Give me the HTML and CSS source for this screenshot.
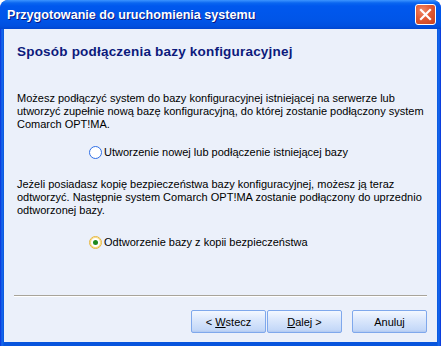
FILE: index.html
```html
<!DOCTYPE html>
<html>
<head>
<meta charset="utf-8">
<link rel="stylesheet" href="styles.css">
</head>
<body>
<div class="window">
  <div class="titlebar">
    <span class="title">Przygotowanie do uruchomienia systemu</span>
    <span class="close">
      <svg width="21" height="21" viewBox="0 0 21 21">
        <path d="M6 6 L15 15 M15 6 L6 15" stroke="#fff" stroke-width="2.2" stroke-linecap="square"/>
      </svg>
    </span>
  </div>
  <div class="client">
    <h1 class="heading">Sposób podłączenia bazy konfiguracyjnej</h1>
    <p class="text p1">Możesz podłączyć system do bazy konfiguracyjnej istniejącej na serwerze lub<br>utworzyć zupełnie nową bazę konfiguracyjną, do której zostanie podłączony system<br>Comarch OPT!MA.</p>
    <label class="radio r1"><span class="dot"></span>Utworzenie nowej lub podłączenie istniejącej bazy</label>
    <p class="text p2">Jeżeli posiadasz kopię bezpieczeństwa bazy konfiguracyjnej, możesz ją teraz<br>odtworzyć. Następnie system Comarch OPT!MA zostanie podłączony do uprzednio<br>odtworzonej bazy.</p>
    <label class="radio r2"><span class="dot checked"></span>Odtworzenie bazy z kopii bezpieczeństwa</label>
    <div class="spacer"></div>
    <div class="sep"></div>
    <div class="buttons">
      <span class="btn"><span>&lt; <u>W</u>stecz</span></span>
      <span class="btn"><span><u>D</u>alej &gt;</span></span>
      <span class="btn gap"><span>Anuluj</span></span>
    </div>
  </div>
</div>
</body>
</html>
```
FILE: styles.css
```css
html, body { margin: 0; padding: 0; }
body { width: 441px; height: 346px; overflow: hidden; background: #fff; }
.window {
  width: 441px; height: 346px;
  box-sizing: border-box;
  display: flex; flex-direction: column;
  background: linear-gradient(to right, #0831d9 0, #166aee 2px, #0855dd 4px, #0855dd 437px, #166aee 439px, #0831d9 441px);
  border-radius: 8px 8px 0 0;
  overflow: hidden;
  font-family: "Liberation Sans", Arial, sans-serif;
}
.titlebar {
  height: 29px; flex: none;
  display: flex; align-items: center; justify-content: space-between;
  padding: 0 5px 0 7px;
  background: linear-gradient(to bottom, #3d95ff 0, #0a66f0 3px, #0058ee 6px, #0055e8 20px, #0050e0 26px, #0046d0 29px);
  border-radius: 8px 8px 0 0;
}
.title {
  color: #fff; font-weight: bold; font-size: 12.6px;
  text-shadow: 1px 1px 0 #0a1882;
}
.close {
  width: 21px; height: 21px; box-sizing: border-box;
  border: 1px solid #fff; border-radius: 3px;
  background: radial-gradient(circle at 35% 30%, #f08a6a 0, #e25a34 45%, #c8401c 100%);
  display: flex;
}
.close svg { display: block; margin: -1px; }
.client {
  flex: 1;
  margin: 0 4px 4px;
  background: #ebf0fa;
  display: flex; flex-direction: column;
  padding: 0 10px 9px 13px;
  font-size: 11px; color: #000;
}
.heading {
  margin: 15px 0 0 0;
  font-size: 13.5px; font-weight: bold; color: #0c1a7c;
  line-height: 16px;
  letter-spacing: 0.2px;
}
.text {
  margin: 0;
  line-height: 13px;
  white-space: nowrap;
}
.p1 { margin-top: 32px; }
.p2 { margin-top: 19px; }
.radio {
  display: flex; align-items: center;
  margin-left: 72px;
  line-height: 13px;
}
.r1 { margin-top: 15px; }
.r2 { margin-top: 19px; }
.dot {
  width: 13px; height: 13px; box-sizing: border-box;
  border: 1px solid #2f6fe6; border-radius: 50%;
  background: #fff;
  margin-right: 2px;
  position: relative;
}
.dot.checked { background: #fff; border-color: #e6b640; box-shadow: inset 0 0 0 1px #f8dc80; }
.dot.checked::after {
  content: ""; position: absolute; left: 3px; top: 3px;
  width: 5px; height: 5px; border-radius: 50%;
  background: #1f8a1f;
}
.spacer { flex: 1; }
.sep {
  height: 1px; background: #a8a49a;
  border-bottom: 1px solid #fff;
  margin: 0 0 13px -3px;
  width: 413px;
}
.buttons { display: flex; justify-content: flex-end; }
.btn {
  width: 75px; height: 23px; box-sizing: border-box;
  border: 1px solid #7fa8ec; border-radius: 2px;
  background: linear-gradient(to bottom, #f4f8ff 0, #dce8fc 40%, #c4d8f8 90%, #b0c8f0 100%);
  display: flex; align-items: center; justify-content: center;
  font-size: 11px; color: #000;
}
.btn + .btn { margin-left: 1px; }
.btn.gap { margin-left: 10px; }
u { text-decoration: underline; }
```
